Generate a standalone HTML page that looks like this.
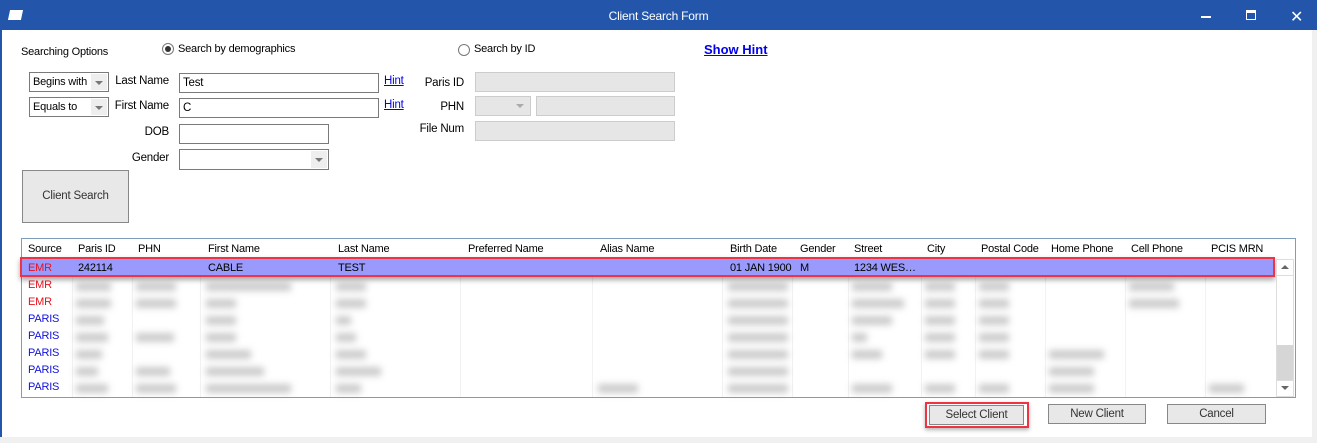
<!DOCTYPE html>
<html><head><meta charset="utf-8"><style>
*{box-sizing:border-box;margin:0;padding:0}
body{width:1317px;height:443px;position:relative;background:#fff;font-family:"Liberation Sans","DejaVu Sans",sans-serif;font-size:11px;letter-spacing:-0.2px;color:#000;overflow:hidden}
.a{position:absolute;white-space:nowrap}
.tb{left:0;top:0;width:1317px;height:30px;background:#2356aa;color:#fff}
.box{position:absolute;border:1px solid #7a7a7a;background:#fff;font-size:11.5px;padding:2px 3px;line-height:14px;overflow:hidden;white-space:nowrap}
.dis{position:absolute;border:1px solid #ccc;background:#e6e6e6}
.arr{position:absolute;width:0;height:0;border-left:4px solid transparent;border-right:4px solid transparent;border-top:4px solid #777}
.btn{position:absolute;border:1px solid #888;background:#e8e8e8;text-align:center;font-size:11.5px;color:#333}
.lbl{position:absolute;font-size:11.5px;text-align:right}
.hint{position:absolute;color:#00e;text-decoration:underline;font-size:11.5px}
.bl{position:absolute;height:9px;background:#999;filter:blur(3.5px);opacity:.5}
</style></head><body>
<div class="a tb"></div>
<div class="a" style="left:9px;top:10px;width:13px;height:10px;background:#fff;transform:skewX(-12deg)"></div>
<div class="a" style="left:0;top:9px;color:#fff;text-align:center;width:1317px;font-size:12px">Client Search Form</div>
<div class="a" style="left:1201px;top:16px;width:10px;height:2px;background:#fff"></div>
<div class="a" style="left:1246px;top:10px;width:10px;height:10px;border:1.5px solid #fff;border-top-width:3px"></div>
<div class="a" style="left:1290px;top:7px;color:#fff;font-size:16px;font-weight:bold">✕</div>
<div class="a" style="left:0;top:30px;width:2px;height:413px;background:#2356aa"></div>
<div class="a" style="left:1312px;top:30px;width:5px;height:413px;background:#f0f0f0"></div>
<div class="a" style="left:0;top:437px;width:1317px;height:6px;background:#f0f0f0"></div>

<div class="a" style="left:21px;top:46px">Searching Options</div>
<div class="a" style="left:162px;top:43px;width:12px;height:12px;border:1px solid #777;border-radius:50%;background:#fff"></div>
<div class="a" style="left:165px;top:46px;width:6px;height:6px;border-radius:50%;background:#333"></div>
<div class="a" style="left:178px;top:43px">Search by demographics</div>
<div class="a" style="left:458px;top:44px;width:12px;height:12px;border:1px solid #777;border-radius:50%;background:#fff"></div>
<div class="a" style="left:474px;top:43px">Search by ID</div>
<div class="a" style="left:704px;top:42px;font-size:13px;font-weight:bold;color:#00e;text-decoration:underline;letter-spacing:0">Show Hint</div>

<div class="box" style="left:29px;top:72px;width:80px;height:20px;font-size:11px">Begins with</div>
<div class="a" style="left:91px;top:74px;width:16px;height:16px;background:#eee"></div><div class="arr" style="left:95px;top:81px"></div>
<div class="box" style="left:29px;top:97px;width:80px;height:20px;font-size:11px">Equals to</div>
<div class="a" style="left:91px;top:99px;width:16px;height:16px;background:#eee"></div><div class="arr" style="left:95px;top:106px"></div>

<div class="lbl" style="left:100px;top:75px;width:69px">Last Name</div>
<div class="lbl" style="left:100px;top:100px;width:69px">First Name</div>
<div class="lbl" style="left:100px;top:126px;width:69px">DOB</div>
<div class="lbl" style="left:100px;top:152px;width:69px">Gender</div>
<div class="box" style="left:179px;top:73px;width:200px;height:20px">Test</div>
<div class="box" style="left:179px;top:98px;width:200px;height:20px">C</div>
<div class="box" style="left:179px;top:124px;width:150px;height:20px"></div>
<div class="box" style="left:179px;top:149px;width:150px;height:21px"></div>
<div class="a" style="left:311px;top:151px;width:16px;height:17px;background:#eee"></div><div class="arr" style="left:315px;top:158px"></div>
<div class="hint" style="left:384px;top:75px">Hint</div>
<div class="hint" style="left:384px;top:99px">Hint</div>

<div class="lbl" style="left:400px;top:77px;width:64px">Paris ID</div>
<div class="lbl" style="left:400px;top:101px;width:64px">PHN</div>
<div class="lbl" style="left:400px;top:123px;width:64px">File Num</div>
<div class="dis" style="left:475px;top:72px;width:200px;height:20px"></div>
<div class="dis" style="left:475px;top:96px;width:56px;height:20px"></div><div class="arr" style="left:516px;top:104px;border-top-color:#aaa"></div>
<div class="dis" style="left:536px;top:96px;width:139px;height:20px"></div>
<div class="dis" style="left:475px;top:121px;width:200px;height:20px"></div>

<div class="btn" style="left:22px;top:170px;width:107px;height:53px;line-height:51px">Client Search</div>

<div class="a" style="left:21px;top:238px;width:1275px;height:160px;border:1px solid #7f9db9"></div>
<div id="g"></div>
<div class="a" style="left:22px;top:259px;width:1252px;height:17px;background:#9a9afc;border-bottom:1px dotted #555"></div>
<div class="a" style="left:20px;top:257px;width:1255px;height:20px;border:2px solid #ee3344;box-shadow:0 3px 5px rgba(0,0,0,.35)"></div>
<div id="t"></div>

<div class="a" style="left:1276px;top:259px;width:18px;height:138px;border:1px solid #ddd;background:#fff"></div>
<div class="a" style="left:1277px;top:345px;width:16px;height:35px;background:#d6d6d6"></div>
<div class="a" style="left:1277px;top:260px;width:16px;height:16px;border-bottom:1px solid #ddd"></div>
<div class="a" style="left:1281px;top:265px;width:0;height:0;border-left:4px solid transparent;border-right:4px solid transparent;border-bottom:4px solid #666"></div>
<div class="a" style="left:1277px;top:380px;width:16px;height:16px;border-top:1px solid #ddd"></div>
<div class="arr" style="left:1281px;top:386px;border-top-color:#666"></div>

<div class="a" style="left:925px;top:402px;width:104px;height:26px;border:2px solid #ee3344;box-shadow:0 2px 4px rgba(0,0,0,.3)"></div>
<div class="btn" style="left:929px;top:405px;width:95px;height:20px;line-height:18px">Select Client</div>
<div class="btn" style="left:1048px;top:404px;width:98px;height:20px;line-height:18px">New Client</div>
<div class="btn" style="left:1167px;top:404px;width:99px;height:20px;line-height:18px">Cancel</div>

<script>
var cols=[["Source",28],["Paris ID",78],["PHN",138],["First Name",208],["Last Name",338],["Preferred Name",468],["Alias Name",600],["Birth Date",730],["Gender",800],["Street",854],["City",927],["Postal Code",981],["Home Phone",1051],["Cell Phone",1131],["PCIS MRN",1211]];
var h="",seps=[72,132,200,330,460,592,722,792,848,921,975,1045,1125,1205];
cols.forEach(function(c){h+='<div class="a" style="left:'+c[1]+'px;top:243px">'+c[0]+'</div>';});
seps.forEach(function(x){h+='<div class="a" style="left:'+x+'px;top:260px;width:1px;height:137px;background:#f2f2f2"></div>';});
document.getElementById("g").innerHTML=h;
var t="",src=["EMR","EMR","EMR","PARIS","PARIS","PARIS","PARIS","PARIS"];
var sel=[["242114",78],["CABLE",208],["TEST",338],["01 JAN 1900",730],["M",800],["1234 WES…",854]];
sel.forEach(function(c){t+='<div class="a" style="left:'+c[1]+'px;top:262px">'+c[0]+'</div>';});
var B=[[78,[35,35,28,32,26,22,32]],[138,[40,40,0,38,0,34,40]],[208,[85,30,30,30,45,58,85]],[338,[30,30,15,20,30,45,25]],[600,[0,0,0,0,0,0,40]],[730,[60,60,60,60,60,60,60]],[854,[40,52,40,15,30,0,40]],[927,[30,30,30,30,30,0,30]],[981,[30,30,30,30,30,0,30]],[1051,[0,0,0,0,55,45,45]],[1131,[45,50,0,0,0,0,0]],[1211,[0,0,0,0,0,0,35]]];
for(var r=0;r<8;r++){var y=262+17*r;t+='<div class="a" style="left:28px;top:'+y+'px;color:'+(r<3?"#e8101a":"#1010e0")+'">'+src[r]+'</div>';}
B.forEach(function(b){b[1].forEach(function(w,i){if(w)t+='<div class="bl" style="left:'+(b[0]-2)+'px;top:'+(282+17*i)+'px;width:'+w+'px"></div>';});});
document.getElementById("t").innerHTML=t;
</script>
</body></html>
